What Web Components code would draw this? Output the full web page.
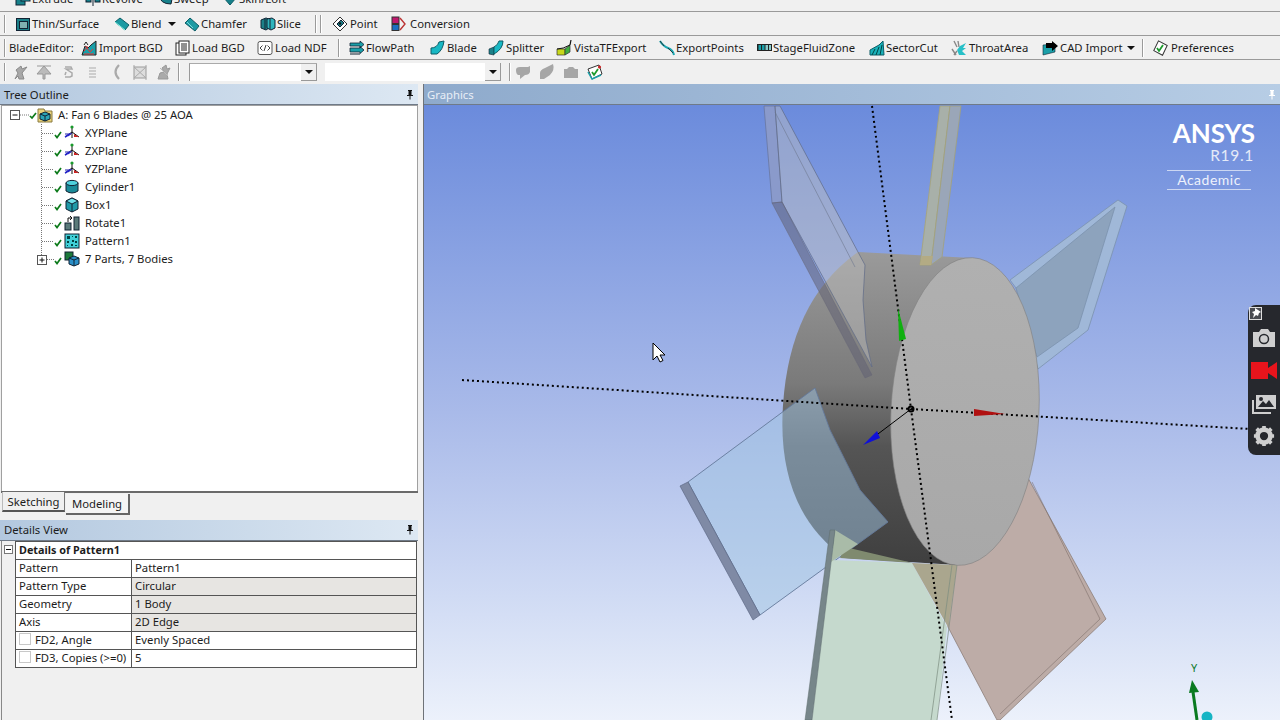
<!DOCTYPE html>
<html><head><meta charset="utf-8">
<style>
html,body{margin:0;padding:0;width:1280px;height:720px;overflow:hidden;background:#f0f0f0;font:11.3px "Noto Sans","Open Sans",sans-serif;color:#1c1c1c}
#app{display:flex;flex-direction:column;height:720px;overflow:hidden}
#work{flex:1;display:flex;min-height:0}
#left{width:418px;display:flex;flex-direction:column;flex:none}
#gap{width:5px;flex:none;background:#f0f0f0;border-right:1px solid #6e7278}
#tree{display:block;height:386px}
</style></head><body>
<script>
const I={
extrude:'<rect x="1" y="4" width="9" height="10" fill="#16808a" stroke="#123"/><rect x="6" y="1" width="9" height="9" fill="#2fb5bd" stroke="#123"/>',
revolve:'<rect x="1" y="3" width="5" height="8" fill="#16808a" stroke="#123"/><rect x="10" y="3" width="5" height="8" fill="#16808a" stroke="#123"/><path d="M8 3v12" stroke="#123"/><path d="M5 1h6" stroke="#c22"/>',
sweep:'<path d="M2 4q1 9 12 9l1-5q-7 0-8-6z" fill="#16808a" stroke="#123"/>',
skin:'<path d="M8 1l6 6-6 7-6-7z" fill="#16808a" stroke="#0d5d66"/>',
thin:'<rect x="1.5" y="2.5" width="13" height="12" fill="#1c8088" stroke="#123"/><rect x="4.5" y="5.5" width="8" height="7" fill="#7fb0b0" stroke="#123"/>',
blend:'<path d="M1 6l5-4 9 7-4 5z" fill="#1c9aa3" stroke="#0d5d66"/><path d="M1 6l10 8" stroke="#8fe" />',
chamfer:'<path d="M1 7l5-5 9 8-4 5z" fill="#1c9aa3" stroke="#0d5d66"/><path d="M3 6l6 6" stroke="#7dd"/>',
slice:'<path d="M1 4l5-2 3 1v9l-3 2-5-2z" fill="#1c8088" stroke="#123"/><path d="M7 3l5-1 3 2v8l-4 2-4-2z" fill="#2fb5bd" stroke="#123"/><path d="M5 3v10M10 3v10" stroke="#123"/>',
point:'<path d="M8 1l7 7-7 7-7-7z" fill="#fff" stroke="#333"/><path d="M5 8l4-4 3 3-4 4z" fill="#1c8088" stroke="#123"/><circle cx="8" cy="7.5" r="1.2" fill="#111"/>',
conv:'<rect x="1" y="1" width="7" height="6.5" fill="#c0186e" stroke="#333"/><rect x="1" y="8.5" width="7" height="6" fill="#1c6fc0" stroke="#333"/><path d="M9 2l5 6-5 6" fill="none" stroke="#b33" stroke-width="1.4"/>',
ibgd:'<path d="M1 15l3-9 3 2 3-3 5-4v14z" fill="#1a9fa8" stroke="#222"/><path d="M3 11l3-3 3 4 3-3M4 7h3M3 14h10" stroke="#e33" fill="none"/><path d="M3 5l2-3 2 3" fill="none" stroke="#222"/>',
lbgd:'<rect x="2" y="3" width="10" height="12" fill="#fff" stroke="#222"/><rect x="5" y="1" width="10" height="12" fill="#fff" stroke="#222"/><path d="M7 4h6M7 6h6M7 8h6M7 10h6" stroke="#222"/>',
ndf:'<rect x="1" y="1.5" width="14" height="13" rx="2" fill="#fff" stroke="#555"/><path d="M5.5 5.5L3 8l2.5 2.5M10.5 5.5L13 8l-2.5 2.5M9 5L7 11" stroke="#444" fill="none"/>',
flow:'<path d="M1 3h10V1l4 3.5-4 3.5V6H1zM1 8h10V6.5L15 10l-4 3.5V12H1z" fill="#1a9fa8" stroke="#123" stroke-width=".8"/><path d="M1 14h10" stroke="#123"/>',
blade:'<path d="M1 14V8q6 0 8-6l5-1q-1 9-7 13z" fill="#18b8c4" stroke="#0d5d66"/>',
split:'<path d="M1 9l5-2v8l-5-1z" fill="#1c8088" stroke="#123" stroke-width=".6"/><path d="M6 7q4-2 5-6l4 0q0 8-9 13z" fill="#18b8c4" stroke="#0d5d66"/>',
vista:'<path d="M1 9h8v6H1z" fill="#c8d81a" stroke="#333" stroke-width=".7"/><path d="M9 9l5-4v7l-5 3z" fill="#3fae3f" stroke="#333" stroke-width=".7"/><path d="M14 5l1-5" stroke="#111" stroke-width="1.2"/><path d="M1 9q6 0 13-4" stroke="#111" fill="none"/>',
epts:'<path d="M1 1q3 5 8 7t6 7" fill="none" stroke="#1aa5b0" stroke-width="2"/><path d="M1 1l4 5M9 8l5 5" stroke="#222" stroke-width=".8"/>',
stage:'<rect x="1" y="4" width="15" height="7" fill="#222"/><rect x="2.5" y="5" width="2.5" height="5" fill="#1a9fa8"/><rect x="6" y="5" width="2.5" height="5" fill="#1a9fa8"/><rect x="9.5" y="5" width="2.5" height="5" fill="#8cc"/><rect x="13" y="5" width="2" height="5" fill="#8cc"/>',
sector:'<path d="M1 15v-5l9-5 4-4 1 14z" fill="#18b0b8" stroke="#0d5d66"/><path d="M3 15l3-6M7 15l3-8M11 15l2-10" stroke="#044"/>',
throat:'<path d="M3 1l3 6M7 1l1 6M1 9l4 6" stroke="#888" stroke-width="1.4"/><path d="M9 6l6-3-3 5 3 0-4 3 4 4H8L6 10z" fill="#28c0c8"/><path d="M6 11l-3 4" stroke="#888" stroke-width="1.4"/>',
cad:'<path d="M1 5l12-1v8L1 15z" fill="#1a9fa8" stroke="#123" stroke-width=".6"/><path d="M4 3h6V1l6 5-6 5V8H4z" fill="#000"/>',
pref:'<path d="M6 1l9 4-4 10-9-4z" transform="rotate(4 8 8)" fill="#fff" stroke="#333"/><path d="M5 8l2 3 4-6" fill="none" stroke="#1c9a2c" stroke-width="1.8"/>',
d1:'<path d="M3 15l3-6-2-3 5-4 1 3 5-2-5 6 2 6H7l-1-3z" fill="#a8a8a8" stroke="#8a8a8a"/>',
d2:'<path d="M1 2h14M8 2l7 8H9v5H7v-5H1z" fill="#bbb" stroke="#999"/>',
d3:'<path d="M5 3h6l1 2H6l6 4v3l-2 1H5M6 8l-1 3" fill="none" stroke="#aaa" stroke-width="1.5"/>',
d4:'<path d="M5 4h7M5 7h7M5 10h7M5 13h7" stroke="#aaa"/>',
d5:'<path d="M11 1Q4 8 11 15" fill="none" stroke="#aaa" stroke-width="2.2"/>',
d6:'<rect x="2" y="3" width="12" height="11" fill="#ddd" stroke="#999"/><path d="M2 3l12 11M14 3L2 14M1 2h2M13 2h2M1 15h2M13 15h2" stroke="#aaa"/>',
d7:'<path d="M2 15l2-6 4-1-2-4 4-3 1 4 3-1-3 6 1 5H7z" fill="#aaa" stroke="#999"/><path d="M4 4l8 8" stroke="#bbb"/>',
g1:'<path d="M1 6q0-3 4-3h8l2-1v6q-1 3-5 3L5 15V11H3Q1 10 1 6z" fill="#a6a6a6"/>',
g2:'<path d="M1 15V9q0-3 5-5l8-4q2 6-3 11l-6 4z" fill="#a6a6a6"/>',
g3:'<path d="M1 5h3l2-2h4l2 2h3v9H1z" fill="#a6a6a6"/>',
g4:'<path d="M1 5l11-4 3 9-10 5z" fill="#fff" stroke="#333"/><path d="M1 8l4 7 9-4" fill="none" stroke="#1a9fa8" stroke-width="1.5"/><path d="M5 8l2 3 4-6" fill="none" stroke="#1c9a2c" stroke-width="1.8"/><circle cx="12.5" cy="3" r="1.6" fill="#c22"/>',
root:'<path d="M1 5V2h6l1 2h7v11H1z" fill="#e8d27a" stroke="#8a7a40"/><path d="M8 5l5 2v5l-5 2-5-2V7z" fill="#2aa5b8" stroke="#123"/><path d="M3 7l5 2 5-2M8 9v5" stroke="#123" fill="none"/>',
plane:'<path d="M8 1v12M1 12l7-5 7 5" stroke="#111" fill="none"/><path d="M8 8l-4 3M1 9h6" stroke="#22a" /><circle cx="8" cy="2" r="1.6" fill="#1a9a2c"/><path d="M10 9l5 3h-5z" fill="#c22"/><path d="M1 12l5-3" stroke="#22c" stroke-width="1.5"/>',
cyl:'<path d="M2 4v8q6 4 12 0V4z" fill="#1a8a98" stroke="#123"/><ellipse cx="8" cy="4" rx="6" ry="2.6" fill="#4fd0dc" stroke="#123"/>',
box:'<path d="M8 1l6 3v8l-6 3-6-3V4z" fill="#1f9aa8" stroke="#123"/><path d="M2 4l6 3 6-3-6-3z" fill="#6fe0e8" stroke="#123"/><path d="M8 7v8" stroke="#123"/>',
rot:'<rect x="1" y="8" width="6" height="7" fill="#5a7a7a" stroke="#123"/><rect x="10" y="2" width="5" height="13" fill="#5a7a7a" stroke="#123"/><path d="M4 7V3h4M6 1l2 2-2 2" fill="none" stroke="#111"/>',
pat:'<rect x="1" y="1" width="14" height="14" fill="#3fd0d8" stroke="#123"/><path d="M3 3h3v3H3zM8 3h1v1H8zM11 3h2v2h-2zM3 8h2v2H3zM8 7h2v2H8zM11 8h2v2h-2zM3 12h1v1H3zM7 11h2v2H7zM11 12h2v1h-2z" fill="#044"/>',
parts:'<rect x="1" y="1" width="8" height="8" fill="#1c7a3a" stroke="#123"/><path d="M10 5l5 2v6l-5 2-5-2V7z" fill="#2a8fc8" stroke="#123"/><path d="M5 7l5 2 5-2M10 9v6" stroke="#123" fill="none"/>'
};
const svgI=(n,s=16)=>`<svg width="${s}" height="${s}" viewBox="0 0 16 16" style="flex:none;display:block">${I[n]||''}</svg>`;
const def=(n,render)=>customElements.define(n,class extends HTMLElement{connectedCallback(){if(!this.shadowRoot){this.attachShadow({mode:'open'}).innerHTML=render(this)}}});

def('x-toolbar',h=>`<style>:host{display:block;flex:none;overflow:hidden;box-sizing:border-box;height:${h.getAttribute('h')||24}px;border-bottom:${h.hasAttribute('flat')?'0':'1px solid #9a9a9a'};background:#f0f0f0}
.r{display:flex;align-items:center;height:${h.hasAttribute('clip')?22:(h.getAttribute('h')||24)-(h.hasAttribute('flat')?0:1)}px;margin-top:${h.hasAttribute('clip')?-12:0}px;padding-left:4px}</style><div class="r"><slot></slot></div>`);
def('x-tool',h=>{const w=h.getAttribute('w');return `<style>:host{display:flex;align-items:center;flex:none;width:${w}px;white-space:nowrap}
.l{margin-left:${h.getAttribute('g')||1}px;padding-bottom:1px}.a{width:0;height:0;border:4px solid transparent;border-top:4.5px solid #111;border-bottom:0;margin-left:${h.getAttribute('ag')||6}px}</style>${svgI(h.getAttribute('i'))}${h.getAttribute('label')?`<span class="l">${h.getAttribute('label')}</span>`:''}${h.hasAttribute('arrow')?'<span class="a"></span>':''}`});
def('x-sep',h=>`<style>:host{display:block;flex:none;width:1px;height:18px;background:#9a9a9a;box-shadow:1px 0 0 #fff;margin-left:${h.getAttribute('l')||0}px;margin-right:${h.getAttribute('r')||0}px}</style>`);
def('x-combo',h=>`<style>:host{display:flex;flex:none;width:${h.getAttribute('w')}px;height:18px;background:#fff;margin-left:${h.getAttribute('l')||0}px;justify-content:flex-end;box-sizing:border-box;${h.hasAttribute('inset')?'border-left:1px solid #999;border-top:1px solid #aaa':''}}
.b{width:15px;background:#f0f0f0;border-right:1px solid #999;border-bottom:1px solid #999;display:flex;align-items:center;justify-content:center}.a{width:0;height:0;border:4px solid transparent;border-top:4.5px solid #111;border-bottom:0}</style><div class="b"><span class="a"></span></div>`);
def('x-head',h=>{const d=h.hasAttribute('dark');return `<style>:host{display:flex;flex:none;align-items:center;justify-content:space-between;box-sizing:border-box;height:${h.getAttribute('h')||21}px;padding:0 3px ${h.getAttribute('pb')||0}px ${d?3:4}px;border-bottom:1px solid #6f7a88;background:linear-gradient(90deg,${d?'#8eaacc,#b7cde5':'#b3c8df,#dde8f3'});color:${d?'#e8eef6':'#1c1c1c'}}
svg{display:block}</style><span>${h.getAttribute('t')}</span><svg width="10" height="11" viewBox="0 0 10 11"><path d="M3 1h4v1H6.500v4H8v1H5.500v3.500h-1V7H2V6h1.500V2H3z" fill="${d?'#fff':'#111'}"/></svg>`});
def('x-tree',h=>`<style>:host{display:block;box-sizing:border-box;margin-left:1px;border:1px solid #a0a0a0;border-bottom:0;background:#fff;overflow:hidden}</style><slot></slot>`);
def('x-node',h=>{const k=h.getAttribute('k')||'c';const lab=h.getAttribute('label');
let con='';
if(k==='root')con=`<rect x="8.500" y="4.500" width="9" height="9" fill="#fff" stroke="#555"/><path d="M10.500 9h5" stroke="#111"/><path d="M18 9h9" stroke="#777" stroke-dasharray="1 1"/><path d="M28 10l2 2 4-5" fill="none" stroke="#0c7a1a" stroke-width="1.7"/><path d="M39.500 16v2" stroke="#777" stroke-dasharray="1 1"/>`;
else{con=`<path d="M39.500 0V${k==='last'?9:18}" stroke="#777" stroke-dasharray="1 1"/><path d="M40 9.500h12" stroke="#777" stroke-dasharray="1 1"/><path d="M53 11l2 2.500 4-5.500" fill="none" stroke="#0c7a1a" stroke-width="1.7"/>`;
if(k==='last')con=`<path d="M39.500 0V5" stroke="#777" stroke-dasharray="1 1"/><rect x="35.500" y="5.500" width="9" height="9" fill="#fff" stroke="#555"/><path d="M37.500 10h5M40 7.500v5" stroke="#111"/><path d="M45 9.500h8" stroke="#777" stroke-dasharray="1 1"/><path d="M53 11l2 2.500 4-5.500" fill="none" stroke="#0c7a1a" stroke-width="1.700"/>`;}
return `<style>:host{display:flex;align-items:center;height:18px;white-space:nowrap}svg{display:block;flex:none}span{margin-left:5px;padding-bottom:1px}</style><svg width="${k==='root'?35:62}" height="18" viewBox="0 0 ${k==='root'?35:62} 18">${con}</svg><div>${svgI(h.getAttribute('i'))}</div><span>${lab}</span>`});
def('x-tabs',h=>`<style>:host{display:flex;flex:none;height:29px;box-sizing:border-box;margin-left:1px;border-top:2px solid #6a6a6a;padding-left:1px;background:#f0f0f0;align-items:flex-start}
.t{box-sizing:border-box;height:20px;display:flex;align-items:center;justify-content:center;background:#f0f0f0}
.a{width:63px;margin-top:-1px;border:1px solid #bbb;border-top:0;border-bottom:2px solid #555;border-right:1.500px solid #777}
.b{width:64px;margin-top:1px;margin-left:1px;height:21px;border-right:2px solid #666;border-bottom:2px solid #666;background:#f4f4f4}</style><div class="t a">Sketching</div><div class="t b">Modeling</div>`);
def('x-details',h=>`<style>:host{display:block;flex:1;background:#f0f0f0;margin-left:1px;border-left:1px solid #888}
.w{display:flex}.g{width:13px;flex:none;display:flex;justify-content:center;padding-top:4px;box-sizing:border-box}
.g svg{display:block}.tb{width:402px;flex:none;border:1px solid #555;box-sizing:border-box;background:#fff}</style><div class="w"><div class="g"><svg width="9" height="9" viewBox="0 0 9 9"><rect x=".5" y=".5" width="8" height="8" fill="#fff" stroke="#777"/><path d="M2 4.500h5" stroke="#111"/></svg></div><div class="tb"><slot></slot></div></div>`);
def('x-drow',h=>{const hd=h.hasAttribute('head'),cb=h.hasAttribute('cb'),gr=h.hasAttribute('grey');
if(hd)return `<style>:host{display:flex;align-items:center;height:18px;box-sizing:border-box;padding:0 0 3px 3px;font-weight:700;border-bottom:1px solid #555;background:#fff;font-size:10.8px}</style>${h.getAttribute('label')}`;
return `<style>:host{display:flex;height:18px;box-sizing:border-box;border-bottom:1px solid #555;white-space:nowrap}:host(:last-child){border-bottom:0;height:17px}
.a{width:116px;box-sizing:border-box;border-right:1px solid #555;padding:0 0 3px 3px;display:flex;align-items:center;background:#fff}
.b{flex:1;padding:0 0 3px 3px;display:flex;align-items:center;background:${gr?'#e7e5e2':'#fff'}}
i{width:10px;height:10px;border:1px solid #c8c8c8;background:#fff;margin:0 4px 0 0;flex:none}</style><div class="a">${cb?'<i></i>':''}${h.getAttribute('label')}</div><div class="b">${h.getAttribute('value')}</div>`});
def('x-logo',h=>`<style>:host{position:absolute;left:743px;top:15px;width:84px;color:#fff;display:flex;flex-direction:column;align-items:flex-end;font-family:Lato,"Noto Sans",sans-serif}
.a{font-size:26px;font-weight:700;line-height:27px;margin-right:-4px}.r{font-size:15.5px;line-height:16px;letter-spacing:.7px;color:#e4eaf8;margin-right:-3px}
.c{align-self:stretch;margin-top:7px;border-top:1px solid #ccd7f2;border-bottom:1px solid #ccd7f2;text-align:center;font-size:14px;line-height:18px;letter-spacing:.5px;color:#eef2fc}</style><div class="a">ANSYS</div><div class="r">R19.1</div><div class="c">Academic</div>`);
def('x-side',h=>`<style>:host{position:absolute;right:0;top:200px;width:32px;height:150px;background:#26282d;border-radius:8px 0 0 8px;display:flex;flex-direction:column;align-items:center}
svg{display:block}.p{position:absolute;left:1px;top:2px}.i{position:absolute;left:4px}</style>
<svg class="p" width="14" height="13" viewBox="0 0 14 13"><rect x=".5" y=".5" width="12" height="12" fill="#4a4c52" stroke="#ddd"/><path d="M6 1l6 4-2 1-1 3-2-1-3 3 1-4-2-2 3-1z" fill="#fff"/></svg>
<svg class="i" style="top:22px" width="24" height="22" viewBox="0 0 24 22"><path d="M1 5h6l2-3h7l2 3h5v15H1z" fill="#cfcfcf"/><circle cx="12" cy="12" r="4.500" fill="none" stroke="#26282d" stroke-width="1.500"/></svg>
<svg class="i" style="top:57px;left:3px" width="26" height="18" viewBox="0 0 26 18"><path d="M0 0h17v17H0zM17 6l9-6v17l-9-6z" fill="#e8141c"/></svg>
<svg class="i" style="top:89px" width="24" height="20" viewBox="0 0 24 20"><path d="M1 6v13h18" fill="none" stroke="#cfcfcf" stroke-width="2"/><rect x="4" y="1" width="20" height="14" fill="#cfcfcf"/><path d="M6 13l5-6 3 3 3-4 5 7z" fill="#26282d"/><circle cx="9" cy="5" r="2" fill="#26282d"/></svg>
<svg class="i" style="top:119px;left:5px" width="22" height="24" viewBox="0 0 24 24"><circle cx="12" cy="12" r="7" fill="none" stroke="#cfcfcf" stroke-width="5"/><path d="M12 1v5M12 18v5M1 12h5M18 12h5M4 4l4 4M16 16l4 4M20 4l-4 4M8 16l-4 4" stroke="#cfcfcf" stroke-width="4"/></svg>`);
def('x-scene',h=>`<style>:host{display:block;position:absolute;inset:0}svg{display:block;width:100%;height:100%}</style>
<svg viewBox="424 105 856 615" preserveAspectRatio="none">
<defs><linearGradient id="bg" x1="0" y1="0" x2="0" y2="1"><stop offset="0" stop-color="#6b8bdc"/><stop offset=".5" stop-color="#a9bae9"/><stop offset=".8" stop-color="#d0dbf4"/><stop offset="1" stop-color="#ecf1fb"/></linearGradient>
<linearGradient id="body" gradientUnits="userSpaceOnUse" x1="0" y1="252" x2="0" y2="565"><stop offset="0" stop-color="#9a9a9a"/><stop offset=".42" stop-color="#7a7a7a"/><stop offset=".62" stop-color="#555"/><stop offset="1" stop-color="#3f3f3f"/></linearGradient>
<linearGradient id="front" gradientUnits="userSpaceOnUse" x1="0" y1="258" x2="0" y2="565"><stop offset="0" stop-color="#b0b0b0"/><stop offset="1" stop-color="#a8a8a8"/></linearGradient></defs>
<rect x="424" y="105" width="856" height="615" fill="url(#bg)"/>
<path d="M1028 478L1106 619 1000 720H997L948 627 950 560z" fill="#bdaca7" stroke="#8d7f78" stroke-width=".8"/>
<path d="M1032 482L1100 619 1000 714" fill="none" stroke="#7f716b" stroke-width=".6"/>
<path d="M1010 280L1118 200 1127 206 1088 330 1038 369 1016 288z" fill="#a0b8d8" stroke="#7b92ad" stroke-width=".8"/>
<path d="M1016 288L1115 207 1078 328 1037 357z" fill="#8da3bd" stroke="#7b92ad" stroke-width=".8"/>
<path d="M858 252Q790 300 783 405T845 558L957 565 972 258z" fill="url(#body)"/>
<path d="M764 106H775L782 202 772 203z" fill="#8a9acb" stroke="#66739a" stroke-width=".7"/>
<path d="M775 106H780L858 252 865 265 863 300 866 340 872 367 782 202z" fill="rgba(190,190,190,.45)" stroke="#5f6a86" stroke-width=".7"/>
<path d="M775 112L855 267" stroke="#6f7890" stroke-width=".6" fill="none"/>
<path d="M772 203L782 202 872 375 865 378z" fill="rgba(95,95,115,.52)" stroke="#667" stroke-width=".5"/>
<path d="M940 106H950L931 265H920z" fill="#a8b0a9" stroke="#a8a574" stroke-width=".8"/>
<path d="M950 106H961L942 257 931 265z" fill="#9aa6b8" stroke="#a3a178" stroke-width=".8"/>
<path d="M920 265L922 256H933L931 265z" fill="#b3ab84"/>
<path d="M688 482L815 388 830 430 860 490 888 522 760 615z" fill="rgba(160,195,225,.5)" stroke="#64799b" stroke-width=".9"/>
<path d="M680 486L688 482 760 615 753 620z" fill="#7f8aa5" stroke="#5f6a86" stroke-width=".7"/>
<path d="M845 547L913 563 840 558z" fill="#7f8a6f"/>
<path d="M831 560L912 563 947 627 937 720H812z" fill="#c5d9cd"/>
<path d="M835 530L858 544 831 562z" fill="#a9bba8"/>
<path d="M830 530H835L812 720H805z" fill="#77868a" stroke="#5e6c6c" stroke-width=".5"/>
<path d="M912 563L957 565 948 627z" fill="#aaa68e"/>
<path d="M952 565L931 720M957 565L937 720" stroke="#7b8c7f" stroke-width=".7" fill="none"/>
<ellipse cx="965" cy="411.500" rx="74" ry="154" transform="rotate(2.800 965 411.500)" fill="url(#front)" stroke="#808080" stroke-width=".6"/>
<g fill="none" stroke="#000" stroke-width="2" stroke-dasharray="2 3"><path d="M462 380L911 409 1250 429"/><path d="M872 106L911 409 952 720"/></g>
<path d="M911 409L870 440" stroke="#000" stroke-width="1"/>
<circle cx="911" cy="409" r="2.500" fill="none" stroke="#000" stroke-width="2"/>
<path d="M898 308L899 341 906 339z" fill="#10b010"/><path d="M863 445L877 431 880 438z" fill="#1010d8"/><path d="M974 409L974 416 1005 414z" fill="#b01010"/>
<text x="1194" y="672" font-size="11" fill="#0f7a2c" text-anchor="middle" font-family="Noto Sans">Y</text>
<path d="M1193 692L1197 720" stroke="#0a7a20" stroke-width="3"/><path d="M1192 680L1199 692 1189 693z" fill="#0a7a20"/>
<circle cx="1207" cy="717" r="5.500" fill="#16b4c4"/>
<path d="M653 343V360L657 356 660 362 663 360.500 660 355H665z" fill="#fff" stroke="#000" stroke-width="1"/>
</svg>`);
</script>
<div id="app">
<x-toolbar h="12" clip>
 <span style="width:11px"></span>
 <x-tool i="extrude" w="70" label="Extrude"></x-tool><x-tool i="revolve" w="72" label="Revolve"></x-tool><x-tool i="sweep" w="65" label="Sweep"></x-tool><x-tool i="skin" w="80" label="Skin/Loft"></x-tool>
</x-toolbar>
<x-toolbar>
 <x-sep style="margin-right:10px"></x-sep>
 <x-tool i="thin" w="99" label="Thin/Surface"></x-tool><x-tool i="blend" w="70" label="Blend" arrow></x-tool><x-tool i="chamfer" w="76" label="Chamfer"></x-tool><x-tool i="slice" w="55" label="Slice"></x-tool>
 <x-sep r="4"></x-sep><x-sep r="11"></x-sep>
 <x-tool i="point" w="59" g="2" label="Point"></x-tool><x-tool i="conv" w="90" g="3" label="Conversion"></x-tool>
</x-toolbar>
<x-toolbar>
 <x-sep r="4"></x-sep>
 <span style="width:72px;flex:none;padding-bottom:1px">BladeEditor:</span>
 <x-tool i="ibgd" w="93" g="2" label="Import BGD"></x-tool><x-tool i="lbgd" w="83" g="2" label="Load BGD"></x-tool><x-tool i="ndf" w="81" g="2" label="Load NDF"></x-tool>
 <x-sep r="10"></x-sep>
 <x-tool i="flow" w="81" label="FlowPath"></x-tool><x-tool i="blade" w="58" label="Blade"></x-tool><x-tool i="split" w="68" g="2" label="Splitter"></x-tool><x-tool i="vista" w="103" g="2" label="VistaTFExport"></x-tool><x-tool i="epts" w="97" label="ExportPoints"></x-tool><x-tool i="stage" w="113" label="StageFluidZone"></x-tool><x-tool i="sector" w="82" label="SectorCut"></x-tool><x-tool i="throat" w="91" g="2" label="ThroatArea"></x-tool><x-tool i="cad" w="100" g="2" label="CAD Import" arrow ag="5"></x-tool>
 <x-sep r="9"></x-sep>
 <x-tool i="pref" w="90" g="3" label="Preferences"></x-tool>
</x-toolbar>
<x-toolbar flat>
 <x-sep r="7"></x-sep>
 <x-tool i="d1" w="24"></x-tool><x-tool i="d2" w="24"></x-tool><x-tool i="d3" w="24"></x-tool><x-tool i="d4" w="24"></x-tool><x-tool i="d5" w="24"></x-tool><x-tool i="d6" w="24"></x-tool><x-tool i="d7" w="22"></x-tool>
 <x-sep r="10"></x-sep>
 <x-combo w="128" inset></x-combo>
 <x-combo w="176" l="8"></x-combo>
 <x-sep l="8" r="5"></x-sep>
 <x-tool i="g1" w="24"></x-tool><x-tool i="g2" w="24"></x-tool><x-tool i="g3" w="24"></x-tool><x-tool i="g4" w="24"></x-tool>
</x-toolbar>
<div id="work">
 <div id="left">
  <x-head t="Tree Outline"></x-head>
  <x-tree id="tree">
   <x-node k="root" i="root" label="A: Fan 6 Blades @ 25 AOA"></x-node>
   <x-node i="plane" label="XYPlane"></x-node><x-node i="plane" label="ZXPlane"></x-node><x-node i="plane" label="YZPlane"></x-node>
   <x-node i="cyl" label="Cylinder1"></x-node><x-node i="box" label="Box1"></x-node><x-node i="rot" label="Rotate1"></x-node><x-node i="pat" label="Pattern1"></x-node>
   <x-node k="last" i="parts" label="7 Parts, 7 Bodies"></x-node>
  </x-tree>
  <x-tabs></x-tabs>
  <x-head t="Details View" pb="2"></x-head>
  <x-details>
   <x-drow head label="Details of Pattern1"></x-drow>
   <x-drow label="Pattern" value="Pattern1"></x-drow>
   <x-drow grey label="Pattern Type" value="Circular"></x-drow>
   <x-drow grey label="Geometry" value="1 Body"></x-drow>
   <x-drow grey label="Axis" value="2D Edge"></x-drow>
   <x-drow cb label="FD2, Angle" value="Evenly Spaced"></x-drow>
   <x-drow cb label="FD3, Copies (&gt;=0)" value="5"></x-drow>
  </x-details>
 </div>
 <div id="gap"></div>
 <div style="flex:1;display:flex;flex-direction:column;min-width:0">
  <x-head dark t="Graphics"></x-head>
  <div style="flex:1;position:relative;overflow:hidden"><x-scene></x-scene><x-logo></x-logo><x-side></x-side></div>
 </div>
</div>
</div>
</body></html>
